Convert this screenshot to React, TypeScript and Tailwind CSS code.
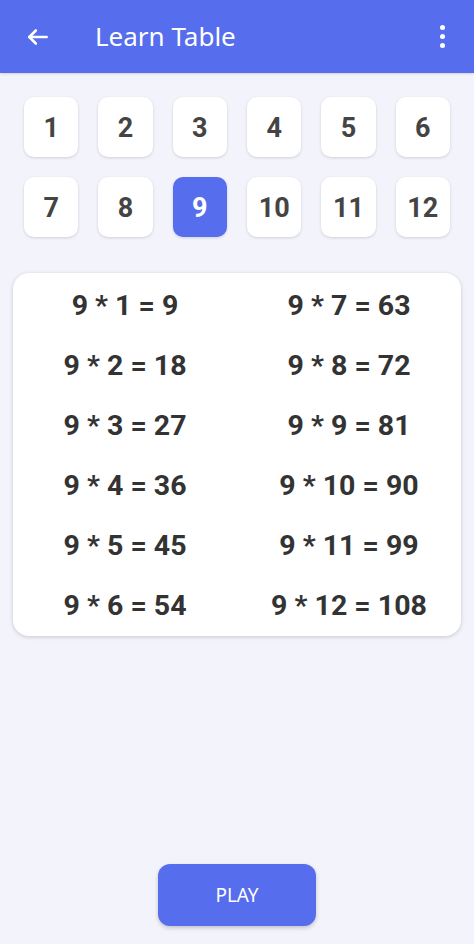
import { useState } from 'react';

const NUMBERS = [1, 2, 3, 4, 5, 6, 7, 8, 9, 10, 11, 12];

export default function App() {
  const [selected, setSelected] = useState(9);

  const left = [1, 2, 3, 4, 5, 6];
  const right = [7, 8, 9, 10, 11, 12];

  return (
    <div className="flex h-[944px] flex-col bg-[#f3f4fb]" style={{ fontFamily: 'Roboto, sans-serif' }}>
      <header className="flex h-[73px] shrink-0 items-center bg-[#566ded] text-white shadow-sm">
        <button className="ml-[22px] flex h-8 w-8 items-center justify-center">
          <svg width="26" height="26" viewBox="0 0 24 24" fill="none" stroke="white" strokeWidth="2.4" strokeLinecap="round" strokeLinejoin="round">
            <path d="M20 12H4" />
            <path d="M10 6l-6 6 6 6" />
          </svg>
        </button>
        <h1 className="ml-[41px] text-[26px] font-normal" style={{ fontFamily: '"Noto Sans", sans-serif' }}>
          Learn Table
        </h1>
        <button className="ml-auto mr-[20px] flex h-8 w-6 flex-col items-center justify-center gap-[4px]">
          <span className="h-[5px] w-[5px] rounded-full bg-white" />
          <span className="h-[5px] w-[5px] rounded-full bg-white" />
          <span className="h-[5px] w-[5px] rounded-full bg-white" />
        </button>
      </header>

      <div className="grid grid-cols-6 gap-x-5 gap-y-5 px-6 pt-6">
        {NUMBERS.map((n) => (
          <button
            key={n}
            onClick={() => setSelected(n)}
            className={
              n === selected
                ? 'flex h-[60px] items-center justify-center rounded-[10px] bg-[#566ded] pt-[2px] text-[27px] font-bold text-white shadow-[0_1px_3px_rgba(0,0,0,0.15)]'
                : 'flex h-[60px] items-center justify-center rounded-[10px] bg-white pt-[2px] text-[27px] font-bold text-[#444] shadow-[0_1px_3px_rgba(0,0,0,0.15)]'
            }
          >
            {n}
          </button>
        ))}
      </div>

      <div className="mx-[13px] mt-9 grid grid-cols-2 rounded-[16px] bg-white pt-[3px] shadow-[0_1px_4px_rgba(0,0,0,0.18)]">
        <div className="flex flex-col">
          {left.map((m) => (
            <div key={m} className="flex h-[60px] items-center justify-center text-[28.5px] font-bold text-[#333]">
              {selected} * {m} = {selected * m}
            </div>
          ))}
        </div>
        <div className="flex flex-col">
          {right.map((m) => (
            <div key={m} className="flex h-[60px] items-center justify-center text-[28.5px] font-bold text-[#333]">
              {selected} * {m} = {selected * m}
            </div>
          ))}
        </div>
      </div>

      <div className="mt-auto mb-[18px] flex justify-center">
        <button
          className="h-[62px] w-[158px] rounded-[12px] bg-[#566ded] text-[19px] text-white shadow-[0_2px_4px_rgba(0,0,0,0.2)]"
          style={{ fontFamily: '"Noto Sans", sans-serif' }}
        >
          PLAY
        </button>
      </div>
    </div>
  );
}
